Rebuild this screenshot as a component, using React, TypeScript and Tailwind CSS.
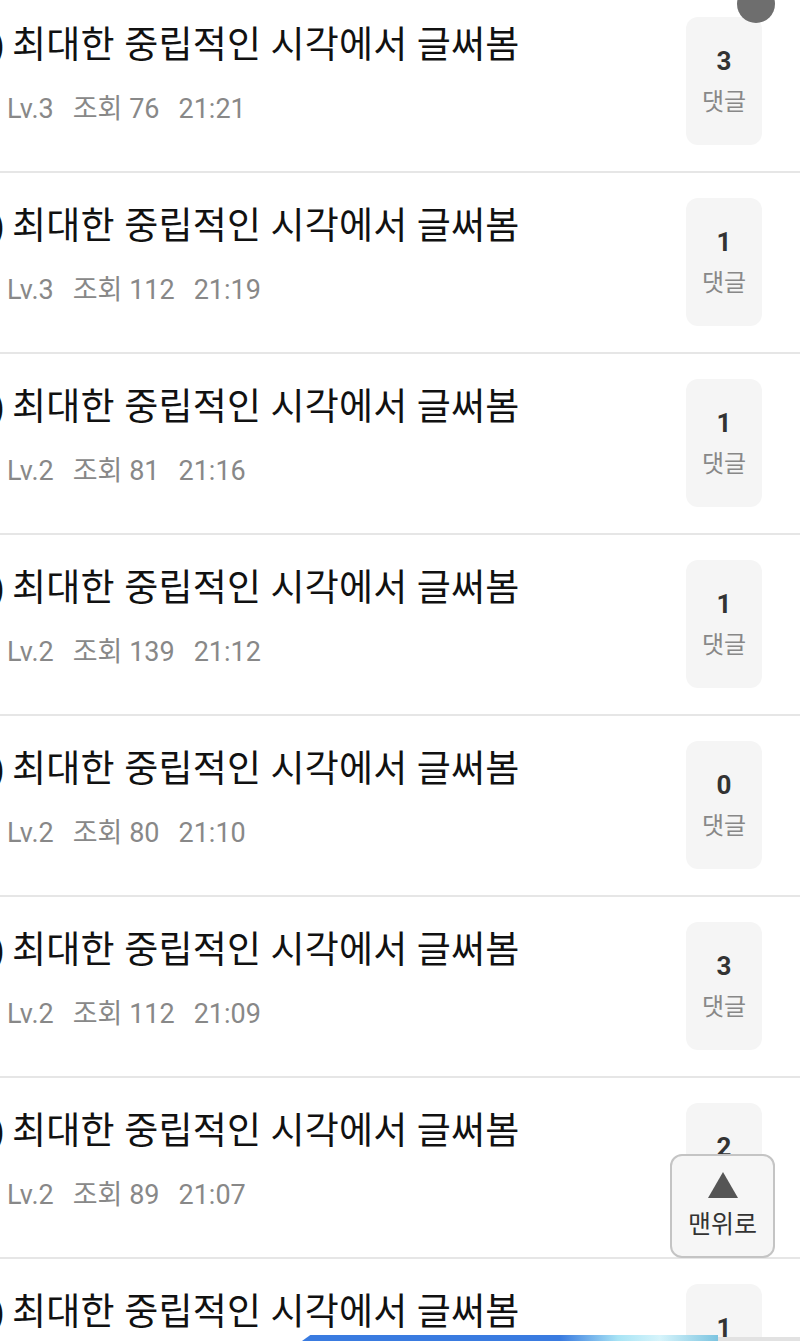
import React from "react";

type Post = {
  level: string;
  views: number | null;
  time: string;
  comments: number;
};

const posts: Post[] = [
  { level: "Lv.3", views: 76, time: "21:21", comments: 3 },
  { level: "Lv.3", views: 112, time: "21:19", comments: 1 },
  { level: "Lv.2", views: 81, time: "21:16", comments: 1 },
  { level: "Lv.2", views: 139, time: "21:12", comments: 1 },
  { level: "Lv.2", views: 80, time: "21:10", comments: 0 },
  { level: "Lv.2", views: 112, time: "21:09", comments: 3 },
  { level: "Lv.2", views: 89, time: "21:07", comments: 2 },
  { level: "Lv.2", views: 95, time: "21:05", comments: 1 },
];

function PostRow({ post }: { post: Post }) {
  return (
    <div className="flex h-[181px] items-start justify-between border-b-2 border-[#e6e6e6] pr-[38px]">
      <div className="flex min-w-0 flex-col pt-[32px]">
        <div className="flex whitespace-nowrap text-[37px] leading-[44px] tracking-[0.2px] text-[#111]">
          <span className="ml-[-8px] mr-[7px]">)</span>
          <span>최대한 중립적인 시각에서 글써봄</span>
        </div>
        <div className="mt-[25px] flex gap-[19px] pl-[7px] text-[27px] leading-[32px] text-[#888]">
          <span>{post.level}</span>
          <span>조회 {post.views}</span>
          <span>{post.time}</span>
        </div>
      </div>
      <div className="mt-[25px] flex h-[128px] w-[76px] shrink-0 flex-col items-center rounded-[12px] bg-[#f5f5f5] pt-[28px]">
        <span className="text-[26px] font-bold leading-[32px] text-[#333]">{post.comments}</span>
        <span className="mt-[10px] text-[24px] leading-[30px] text-[#888]">댓글</span>
      </div>
    </div>
  );
}

export default function App() {
  return (
    <div className="relative h-[1341px] w-[800px] overflow-hidden bg-white font-['Roboto','Noto_Sans_CJK_KR',sans-serif]">
      <div className="mt-[-8px]">
        {posts.map((post, i) => (
          <PostRow key={i} post={post} />
        ))}
      </div>

      {/* floating avatar dot */}
      <div className="absolute left-[737px] top-[-15px] h-[38px] w-[38px] rounded-full bg-[#6e6e6e]" />

      {/* scroll to top */}
      <button className="absolute left-[670px] top-[1154px] flex h-[104px] w-[105px] flex-col items-center rounded-[12px] border-2 border-[#c4c4c4] bg-[#f6f6f6] pt-[16px]">
        <svg width="30" height="26" viewBox="0 0 30 26">
          <polygon points="15,0 30,26 0,26" fill="#555" />
        </svg>
        <span className="mt-[12px] text-[25px] leading-[30px] text-[#333]">맨위로</span>
      </button>

      {/* bottom banner strip */}
      <div className="absolute left-[302px] top-[1335px] h-[6px] w-[416px] bg-[linear-gradient(90deg,#3a7be0_0%,#3a7be0_62%,#a8e4f5_76%,#d6f4fb_86%,#7cc4e0_100%)] [clip-path:polygon(2%_0,100%_0,100%_100%,0_100%)]" />
      <div className="absolute left-[718px] top-[1337px] h-[4px] w-[82px] bg-[#e2e2e2]" />
    </div>
  );
}
